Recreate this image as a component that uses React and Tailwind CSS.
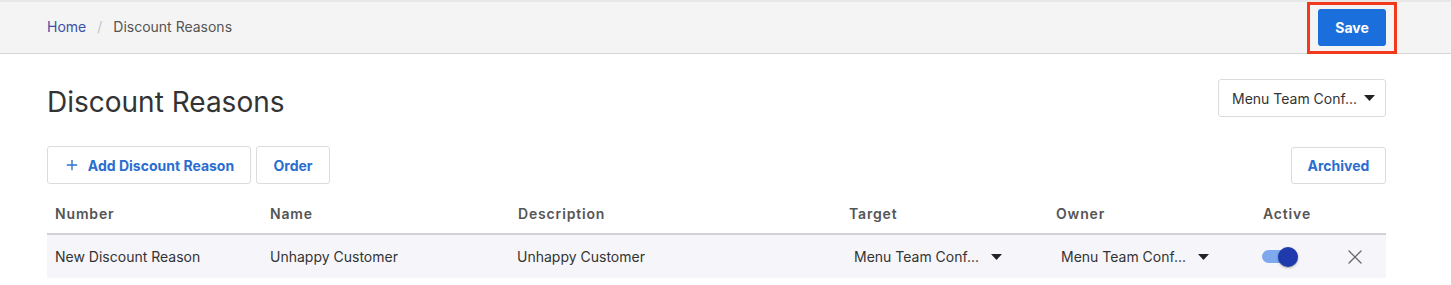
import { Plus, X } from 'lucide-react'

const Caret = () => (
  <svg width="11" height="6" viewBox="0 0 11 6" className="shrink-0">
    <path d="M0 0 L11 0 L5.5 6 Z" fill="#222" />
  </svg>
)

const Select = ({ className = '' }) => (
  <div className={`flex items-center ${className}`}>
    <span className="text-[14px] text-[#333]">Menu Team Conf...</span>
    <span className="ml-[12px]"><Caret /></span>
  </div>
)

const App = () => {
  const cols = 'grid grid-cols-[215px_248px_331px_207px_207px_1fr]'

  return (
    <div className="w-[1451px] h-[285px] bg-white relative font-['Inter',sans-serif] text-[#333]">
      {/* top bar */}
      <div className="h-[54px] bg-[#f4f4f4] border-t-2 border-t-[#e8e8e8] border-b border-b-[#d6d6d6] flex items-center justify-between pl-[47px] pr-[65px]">
        <div className="flex items-center text-[14px] -mt-[2px]">
          <span className="text-[#3b4fa8]">Home</span>
          <span className="mx-[11px] text-[#c4c4c4]">/</span>
          <span className="text-[#555]">Discount Reasons</span>
        </div>
        <button className="w-[68px] h-[37px] bg-[#1b6fdc] rounded-[3px] text-white text-[14px] font-bold">
          Save
        </button>
      </div>
      {/* annotation box */}
      <div className="absolute left-[1307px] top-[2px] w-[90px] h-[52px] border-[3px] border-[#f2391c]"></div>

      <div className="px-[65px] pl-[47px]">
        <div className="flex items-center justify-between mt-[25px]">
          <h1 className="text-[28px] font-normal text-[#333] leading-none mt-[7px]">Discount Reasons</h1>
          <div className="w-[168px] h-[38px] border border-[#dcdcdc] rounded-[3px] flex items-center pl-[13px] pr-[10px] justify-between">
            <span className="text-[14px] text-[#333]">Menu Team Conf...</span>
            <Caret />
          </div>
        </div>

        <div className="flex items-center justify-between mt-[29px]">
          <div className="flex gap-[5px]">
            <button className="w-[204px] h-[38px] border border-[#dcdcdc] rounded-[3px] flex items-center justify-center gap-[8px] text-[#2c6dd0] text-[14px] font-bold">
              <Plus size={16} strokeWidth={2} />
              Add Discount Reason
            </button>
            <button className="w-[74px] h-[38px] border border-[#dcdcdc] rounded-[3px] text-[#2c6dd0] text-[14px] font-bold">
              Order
            </button>
          </div>
          <button className="w-[95px] h-[37px] border border-[#dcdcdc] rounded-[3px] text-[#2c6dd0] text-[14px] font-bold">
            Archived
          </button>
        </div>

        <div>
          <div className={`${cols} h-[51px] items-end pb-[9px] border-b-2 border-[#d2d2d6] text-[14px] font-semibold text-[#555] tracking-[0.06em]`}>
            <div className="pl-[8px]">Number</div>
            <div className="pl-[8px]">Name</div>
            <div className="pl-[8px]">Description</div>
            <div className="pl-[8px]">Target</div>
            <div className="pl-[8px]">Owner</div>
            <div className="pl-[8px]">Active</div>
          </div>
          <div className={`${cols} h-[43px] items-center bg-[#f6f6fa] text-[14px] text-[#333]`}>
            <div className="pl-[8px]">New Discount Reason</div>
            <div className="pl-[8px]">Unhappy Customer</div>
            <div className="pl-[7px]">Unhappy Customer</div>
            <Select className="pl-[13px]" />
            <Select className="pl-[13px]" />
            <div className="flex items-center pl-[7px]">
              <div className="relative w-[36px] h-[20px] flex items-center">
                <div className="w-[30px] h-[13px] rounded-full bg-[#7fa8ee]"></div>
                <div className="absolute right-0 top-0 w-[20px] h-[20px] rounded-full bg-[#1f3aad] shadow-[0_1px_2px_rgba(0,0,0,0.35)]"></div>
              </div>
              <X size={24} strokeWidth={1.3} className="ml-[45px] text-[#666]" />
            </div>
          </div>
        </div>
      </div>
    </div>
  )
}

export default App
